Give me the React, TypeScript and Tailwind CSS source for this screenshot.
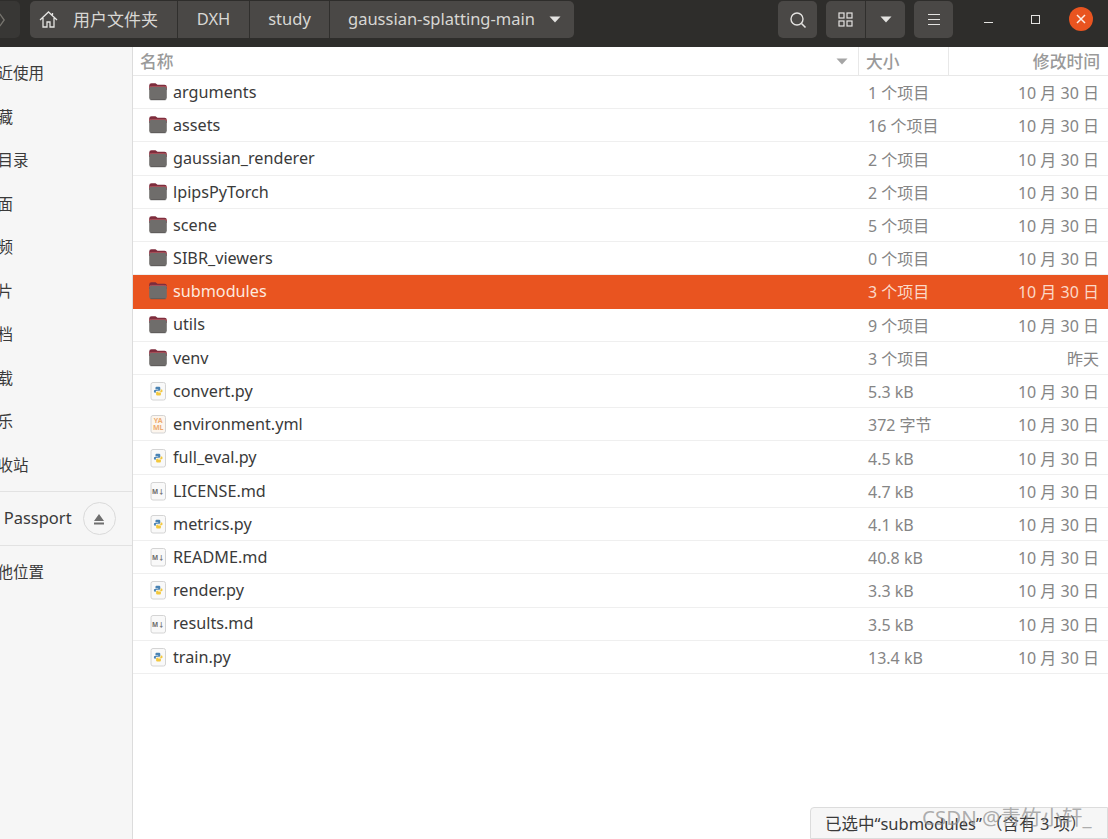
import React from 'react';

const FONT = '"Noto Sans", "Noto Sans CJK SC", sans-serif';

type Kind = 'folder' | 'py' | 'yml' | 'md';

const files: { name: string; size: string; date: string; kind: Kind; selected?: boolean }[] = [
    { name: 'arguments', size: '1 个项目', date: '10 月 30 日', kind: 'folder' },
    { name: 'assets', size: '16 个项目', date: '10 月 30 日', kind: 'folder' },
    { name: 'gaussian_renderer', size: '2 个项目', date: '10 月 30 日', kind: 'folder' },
    { name: 'lpipsPyTorch', size: '2 个项目', date: '10 月 30 日', kind: 'folder' },
    { name: 'scene', size: '5 个项目', date: '10 月 30 日', kind: 'folder' },
    { name: 'SIBR_viewers', size: '0 个项目', date: '10 月 30 日', kind: 'folder' },
    { name: 'submodules', size: '3 个项目', date: '10 月 30 日', kind: 'folder', selected: true },
    { name: 'utils', size: '9 个项目', date: '10 月 30 日', kind: 'folder' },
    { name: 'venv', size: '3 个项目', date: '昨天', kind: 'folder' },
    { name: 'convert.py', size: '5.3 kB', date: '10 月 30 日', kind: 'py' },
    { name: 'environment.yml', size: '372 字节', date: '10 月 30 日', kind: 'yml' },
    { name: 'full_eval.py', size: '4.5 kB', date: '10 月 30 日', kind: 'py' },
    { name: 'LICENSE.md', size: '4.7 kB', date: '10 月 30 日', kind: 'md' },
    { name: 'metrics.py', size: '4.1 kB', date: '10 月 30 日', kind: 'py' },
    { name: 'README.md', size: '40.8 kB', date: '10 月 30 日', kind: 'md' },
    { name: 'render.py', size: '3.3 kB', date: '10 月 30 日', kind: 'py' },
    { name: 'results.md', size: '3.5 kB', date: '10 月 30 日', kind: 'md' },
    { name: 'train.py', size: '13.4 kB', date: '10 月 30 日', kind: 'py' },
];

const places = ['最近使用', '收藏', '主目录', '桌面', '视频', '图片', '文档', '下载', '音乐', '回收站'];

const FileIcon = ({ kind }: { kind: Kind }) => {
    if (kind === 'folder') {
        return (
            <svg width="20" height="20" viewBox="0 0 20 20" className="shrink-0">
                <path d="M1.2 3.5Q1.2 1.2 3.5 1.2H7.5L9.5 2.8H16.5Q18.8 2.8 18.8 5V8H1.2Z" fill="#7d2c3c" />
                <rect x="1.2" y="4.4" width="17.6" height="13.6" rx="2.2" fill="#6f6d6b" />
                <path d="M1.4 6Q1.6 4.4 3.4 4.4H16.6Q18.4 4.4 18.6 6" fill="none" stroke="#b0505a" strokeWidth="0.9" />
                <path d="M2.4 17.8H17.6" stroke="#4c4a49" strokeWidth="0.6" />
            </svg>
        );
    }
    return (
        <svg width="20" height="20" viewBox="0 0 20 20" className="shrink-0">
            <rect x="3" y="1.5" width="14.5" height="17.5" rx="2" fill={kind === 'yml' ? '#fdf6ee' : '#f9f9f9'} stroke="#d4d4d4" />
            {kind === 'py' && (
                <g transform="translate(10.2 10.2) scale(0.8) translate(-10 -10)">
                    <path d="M10 4.5H7.8Q6.6 4.5 6.6 5.8V8H10V8.6H5.8Q4.6 8.6 4.6 10.2Q4.6 12 5.8 12H7V10.6Q7 9.4 8.2 9.4H11.4Q12.6 9.4 12.6 8.2V5.8Q12.6 4.5 11.2 4.5Z" fill="#4a83b3" />
                    <path d="M10 15.5H12.2Q13.4 15.5 13.4 14.2V12H10V11.4H14.2Q15.4 11.4 15.4 9.8Q15.4 8 14.2 8H13V9.4Q13 10.6 11.8 10.6H8.6Q7.4 10.6 7.4 11.8V14.2Q7.4 15.5 8.8 15.5Z" fill="#f3c83e" />
                </g>
            )}
            {kind === 'yml' && (
                <>
                    <text x="10.2" y="9.4" textAnchor="middle" fontSize="7" fontWeight="700" fill="#edac70" fontFamily={FONT}>YA</text>
                    <text x="10.2" y="16" textAnchor="middle" fontSize="7" fontWeight="700" fill="#edac70" fontFamily={FONT}>ML</text>
                </>
            )}
            {kind === 'md' && (
                <text x="10.2" y="12.5" textAnchor="middle" fontSize="6.5" fontWeight="700" fill="#6a6a6a" fontFamily={FONT}>M↓</text>
            )}
        </svg>
    );
};

const FileRow = ({ file }: { file: (typeof files)[number] }) => (
    <div
        className={`h-[33.22px] flex items-center border-b ${
            file.selected ? 'bg-[#e95420] border-[#e95420]' : 'bg-white border-[#efefef]'
        }`}
    >
        <div className="w-[726px] pl-[15px] flex items-center gap-[5px] shrink-0">
            <FileIcon kind={file.kind} />
            <span className={`text-[16.2px] ${file.selected ? 'text-[#fde9df]' : 'text-[#3a3a3a]'}`}>{file.name}</span>
        </div>
        <div className={`w-[120px] pl-[9px] pt-[2px] shrink-0 text-[16px] ${file.selected ? 'text-[#fbd9c8]' : 'text-[#858585]'}`}>
            {file.size}
        </div>
        <div className={`w-[129px] pr-[9px] pt-[2px] shrink-0 text-right text-[16px] ${file.selected ? 'text-[#fbd9c8]' : 'text-[#858585]'}`}>
            {file.date}
        </div>
    </div>
);

const Caret = ({ color = '#e4e3e1' }: { color?: string }) => (
    <svg width="12" height="7" viewBox="0 0 12 7">
        <path d="M0.5 0.5H11.5L6 6.5Z" fill={color} />
    </svg>
);

const crumbClass = 'h-full flex items-center justify-center border-r border-[#302f2d] text-[16.5px] text-[#d8d7d4]';

const TitleBar = () => (
    <div className="h-[47px] bg-[#2e2d2b] flex items-start pt-[1px] shrink-0">
        <div className="w-[40px] ml-[-20px] mr-[10px] h-[37px] rounded-[5px] bg-[#383735] flex items-center justify-end pr-[15px]">
            <svg width="6" height="14" viewBox="0 0 6 14">
                <path d="M0.8 1L5.2 7L0.8 13" fill="none" stroke="#77756f" strokeWidth="1.3" />
            </svg>
        </div>
        <div className="h-[37px] w-[544px] rounded-[5px] bg-[#4a4846] flex items-stretch">
            <div className={`${crumbClass} w-[148px] !justify-start pl-[9px] gap-[15px]`}>
                <svg width="19" height="19" viewBox="0 0 19 19" className="shrink-0">
                    <path d="M1 10L9.5 2L18 10M13.5 3V6M4 8V17H8V12H11V17H15V8" fill="none" stroke="#e4e3e1" strokeWidth="1.3" />
                </svg>
                <span className="text-[17px] whitespace-nowrap">用户文件夹</span>
            </div>
            <div className={`${crumbClass} w-[72px]`}>DXH</div>
            <div className={`${crumbClass} w-[80px]`}>study</div>
            <div className="flex-1 flex items-center pl-[18px] gap-[14px] text-[16.5px] text-[#d8d7d4] whitespace-nowrap">
                <span>gaussian-splatting-main</span>
                <Caret />
            </div>
        </div>
        <div className="ml-[204px] w-[39px] h-[37px] rounded-[5px] bg-[#4a4846] flex items-center justify-center">
            <svg width="18" height="18" viewBox="0 0 18 18">
                <circle cx="8" cy="8" r="6" fill="none" stroke="#e4e3e1" strokeWidth="1.4" />
                <path d="M12.5 12.5L16.5 16.5" stroke="#e4e3e1" strokeWidth="1.6" />
            </svg>
        </div>
        <div className="ml-[9px] w-[79px] h-[37px] rounded-[5px] bg-[#4a4846] flex">
            <div className="w-[40px] border-r border-[#302f2d] flex items-center justify-center">
                <svg width="15" height="15" viewBox="0 0 15 15">
                    <g fill="none" stroke="#e4e3e1" strokeWidth="1.2">
                        <rect x="1" y="1" width="5" height="5" />
                        <rect x="9" y="1" width="5" height="5" />
                        <rect x="1" y="9" width="5" height="5" />
                        <rect x="9" y="9" width="5" height="5" />
                    </g>
                </svg>
            </div>
            <div className="flex-1 flex items-center justify-center">
                <Caret />
            </div>
        </div>
        <div className="ml-[9px] w-[39px] h-[37px] rounded-[5px] bg-[#4a4846] flex flex-col items-center justify-center gap-[4px]">
            <div className="w-[12px] h-px bg-[#e4e3e1]" />
            <div className="w-[12px] h-px bg-[#e4e3e1]" />
            <div className="w-[12px] h-px bg-[#e4e3e1]" />
        </div>
        <div className="ml-[31px] mt-[21px] w-[9px] h-px bg-[#e4e3e1]" />
        <div className="ml-[38px] mt-[14px] w-[9px] h-[9px] border border-[#e4e3e1]" />
        <div className="ml-[29px] mt-[6px] w-[24px] h-[24px] rounded-full bg-[#e95420] flex items-center justify-center">
            <svg width="10" height="10" viewBox="0 0 10 10">
                <path d="M1 1L9 9M9 1L1 9" stroke="#fdeee7" strokeWidth="1.5" />
            </svg>
        </div>
    </div>
);

const Sidebar = () => (
    <div className="w-[133px] shrink-0 bg-[#f6f6f6] border-r border-[#dcdcdc] overflow-hidden text-[15.5px] text-[#3a3a3a] pt-[5px]">
        {places.map((p) => (
            <div key={p} className="h-[43.5px] flex items-center ml-[-18px] whitespace-nowrap">
                {p}
            </div>
        ))}
        <div className="mt-[4px] border-t border-[#e2e2e2] h-[54px] flex items-center ml-[-24px] whitespace-nowrap">
            <span className="text-[16.5px]">My Passport</span>
            <div className="ml-[11px] w-[33px] h-[33px] rounded-full border border-[#dadada] flex items-center justify-center">
                <svg width="12" height="12" viewBox="0 0 12 12">
                    <path d="M6 1L11 8H1Z M1 9.5H11V11.5H1Z" fill="#6f6f6f" />
                </svg>
            </div>
        </div>
        <div className="border-t border-[#e2e2e2] h-[54px] flex items-center ml-[-18px] whitespace-nowrap">其他位置</div>
    </div>
);

const ColumnHeader = () => (
    <div className="h-[29px] flex border-b border-[#e8e8e8] text-[16.8px] font-medium text-[#9a9a9a] bg-white">
        <div className="w-[726px] shrink-0 pl-[7px] pr-[10px] flex items-center justify-between border-r border-[#e8e8e8]">
            <span className="pt-[2px]">名称</span>
            <Caret color="#a5a5a5" />
        </div>
        <div className="w-[90px] shrink-0 pl-[7px] pt-[2px] flex items-center border-r border-[#e8e8e8]">大小</div>
        <div className="flex-1 pr-[8px] pt-[2px] flex items-center justify-end">修改时间</div>
    </div>
);

export default function App() {
    return (
        <div className="relative w-[1108px] h-[839px] overflow-hidden flex flex-col bg-white" style={{ fontFamily: FONT }}>
            <TitleBar />
            <div className="flex flex-1 min-h-0">
                <Sidebar />
                <div className="flex-1 min-w-0">
                    <ColumnHeader />
                    {files.map((f) => (
                        <FileRow key={f.name} file={f} />
                    ))}
                </div>
            </div>

            {/* floating status label */}
            <div className="absolute left-[810px] top-[807px] w-[298px] h-[32px] bg-[#f6f6f6] border border-[#dcdcdc] rounded-tl-[4px] pl-[14px] pt-[3px] flex items-center text-[16.5px] text-[#3a3a3a] whitespace-nowrap">
                已选中“submodules” （含有 3 项）
            </div>
            {/* watermark */}
            <div className="absolute left-[922px] top-[802px] text-[20.5px] text-[#8c8c8c]/70 whitespace-nowrap">CSDN @青竹小轩_</div>
        </div>
    );
}
